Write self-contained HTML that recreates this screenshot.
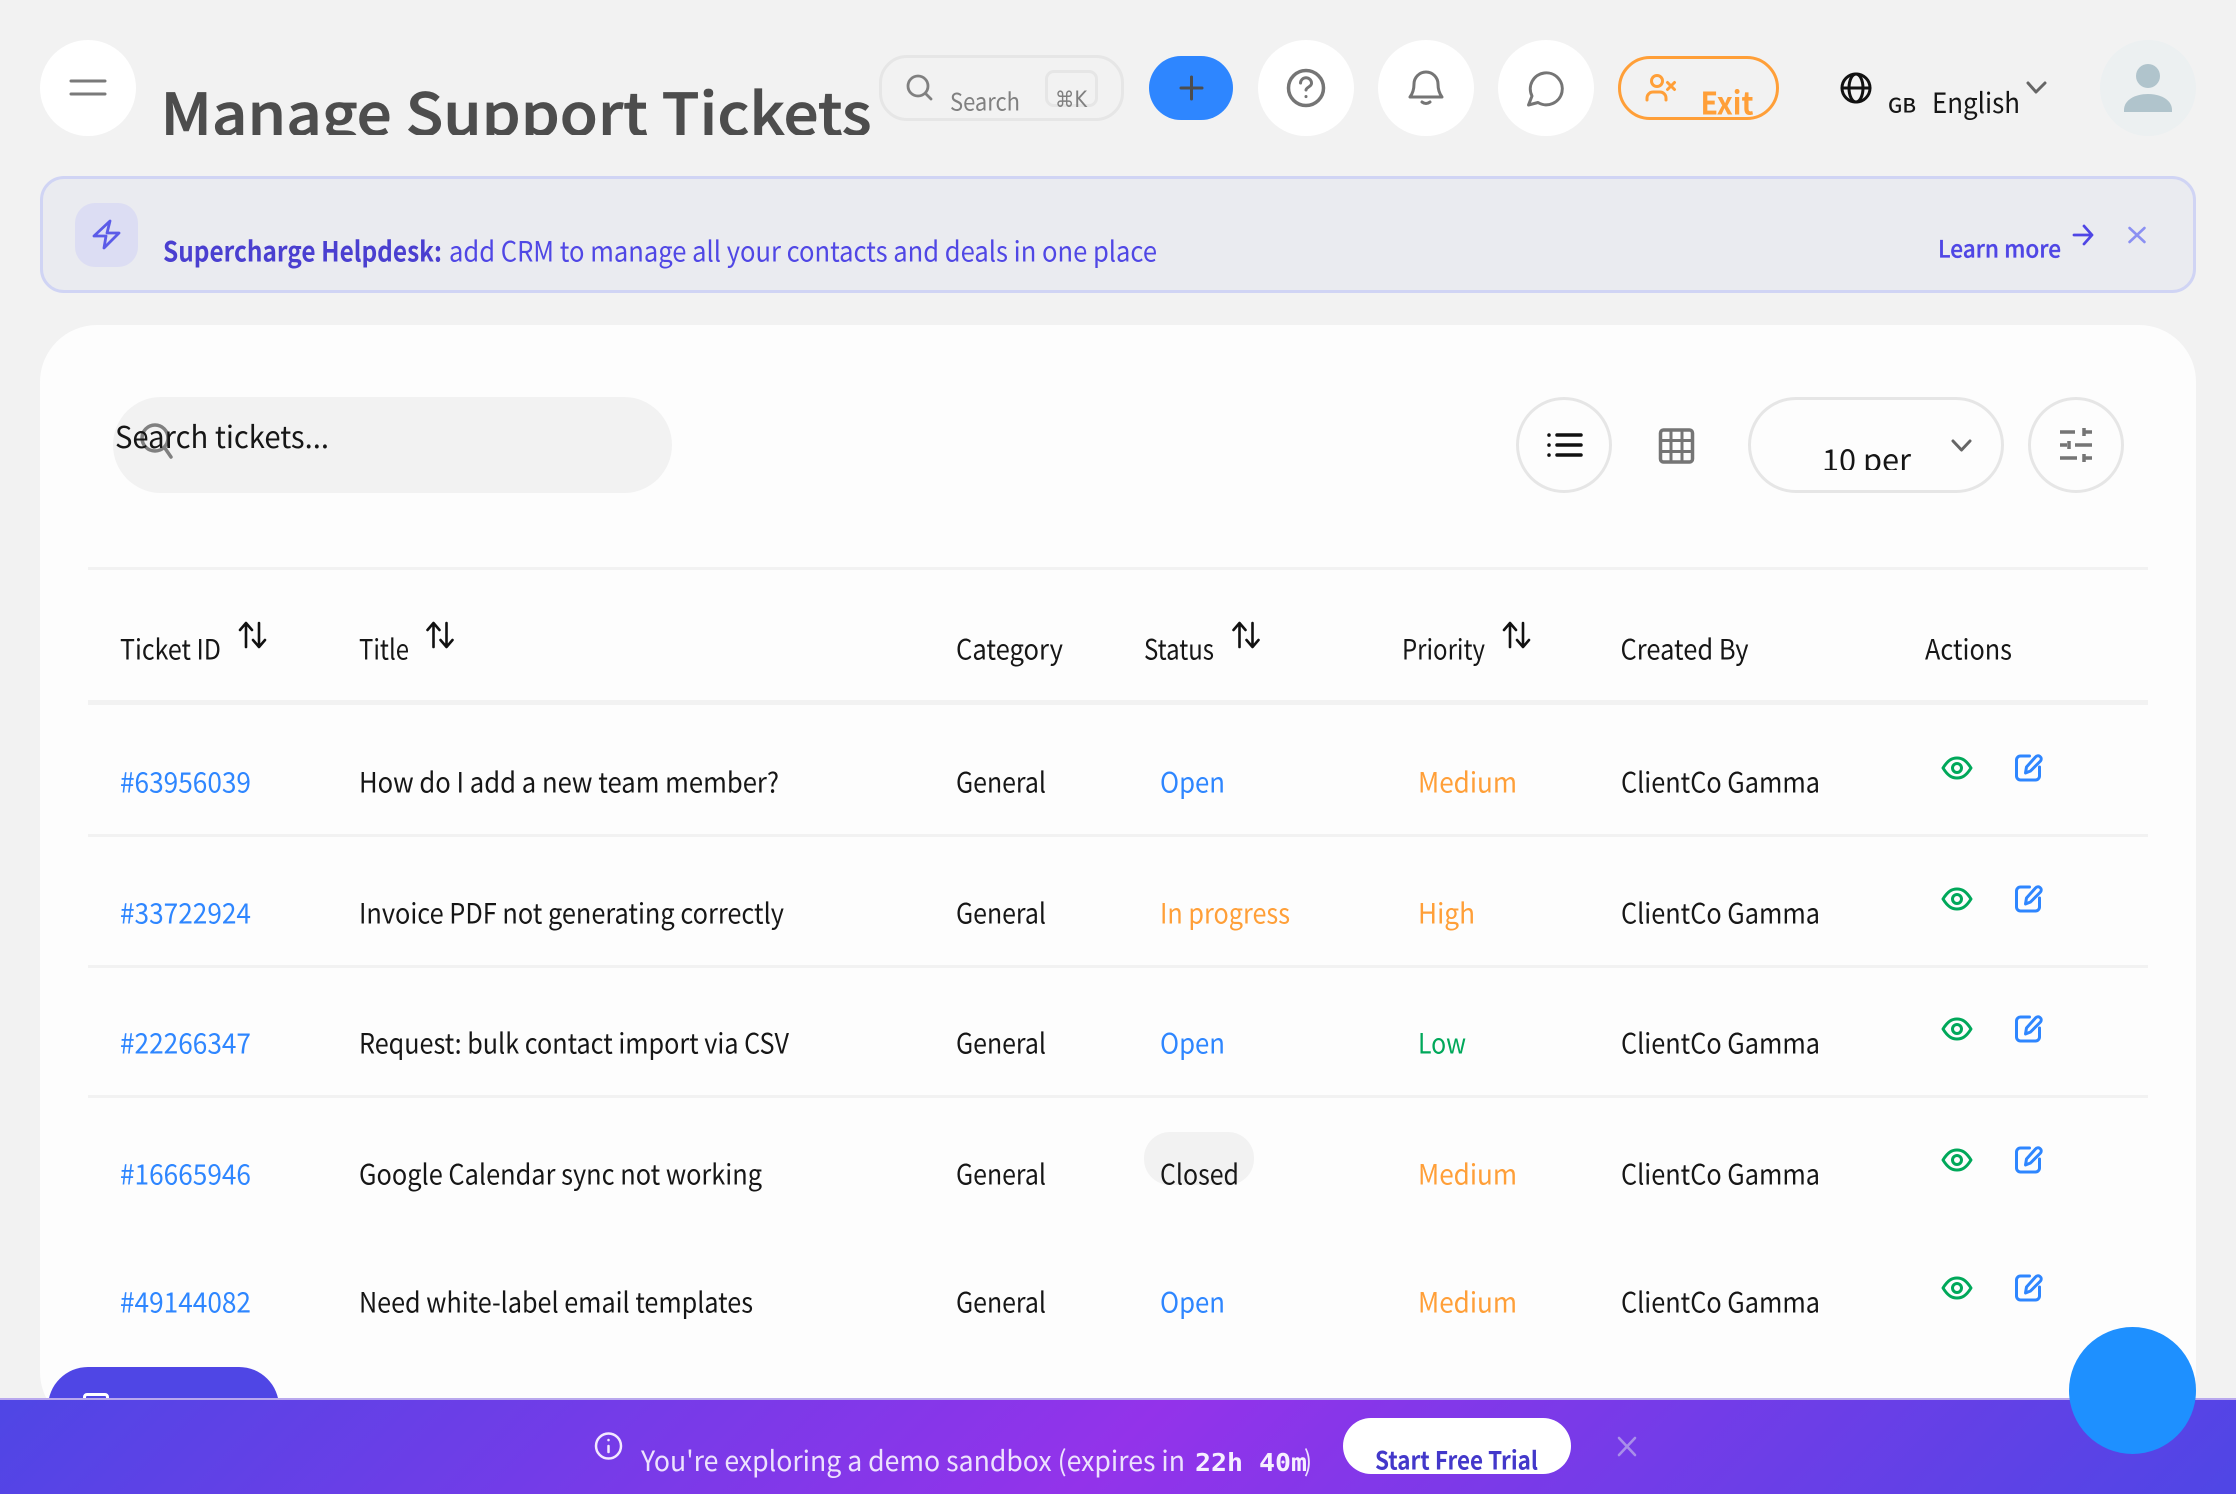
<!DOCTYPE html>
<html lang="en"><head><meta charset="utf-8"><title>Manage Support Tickets</title>
<style>
html,body{margin:0;padding:0;width:2236px;height:1494px;overflow:hidden;background:#f2f2f2}
.b{position:absolute;box-sizing:border-box}
svg{position:absolute;left:0;top:0}
text{font-family:"Noto Sans CJK SC","Liberation Sans",sans-serif;font-size:28px;fill:#161616}
.i{fill:none;stroke-linecap:round;stroke-linejoin:round}
</style></head><body>
<div class="b" style="left:40px;top:40px;width:96px;height:96px;border-radius:50%;background:#fff"></div>
<div class="b" style="left:879px;top:55px;width:245px;height:66px;border:3px solid #e6e6e6;border-radius:28px"></div>
<div class="b" style="left:1045px;top:70px;width:53px;height:37px;border:3px solid #e6e6e6;border-radius:9px"></div>
<div class="b" style="left:1149px;top:56px;width:84px;height:64px;border-radius:32px;background:#2e86ff"></div>
<div class="b" style="left:1258px;top:40px;width:96px;height:96px;border-radius:50%;background:#fff"></div>
<div class="b" style="left:1378px;top:40px;width:96px;height:96px;border-radius:50%;background:#fff"></div>
<div class="b" style="left:1498px;top:40px;width:96px;height:96px;border-radius:50%;background:#fff"></div>
<div class="b" style="left:1618px;top:56px;width:161px;height:64px;border:3px solid #ff9f38;border-radius:32px"></div>
<div class="b" style="left:2100px;top:40px;width:96px;height:96px;border-radius:50%;background:#ecf0f1"></div>
<div class="b" style="left:40px;top:176px;width:2156px;height:117px;border:3px solid #d0d4f4;border-radius:24px;background:#eaebf0"></div>
<div class="b" style="left:75px;top:203px;width:63px;height:64px;border-radius:20px;background:#dcddf3"></div>
<div class="b" style="left:40px;top:325px;width:2156px;height:1104px;border-radius:57px;background:#fdfdfd"></div>
<div class="b" style="left:113px;top:397px;width:559px;height:96px;border-radius:48px;background:#f2f2f2"></div>
<div class="b" style="left:1516px;top:397px;width:96px;height:96px;border:3px solid #e6e6e6;border-radius:50%"></div>
<div class="b" style="left:1748px;top:397px;width:256px;height:96px;border:3px solid #e6e6e6;border-radius:48px"></div>
<div class="b" style="left:2028px;top:397px;width:96px;height:96px;border:3px solid #e6e6e6;border-radius:50%"></div>
<div class="b" style="left:88px;top:567px;width:2060px;height:3px;background:#f2f2f2"></div>
<div class="b" style="left:88px;top:700px;width:2060px;height:5px;background:#f2f2f2"></div>
<div class="b" style="left:88px;top:834px;width:2060px;height:3px;background:#f2f2f2"></div>
<div class="b" style="left:88px;top:965px;width:2060px;height:3px;background:#f2f2f2"></div>
<div class="b" style="left:88px;top:1095px;width:2060px;height:3px;background:#f2f2f2"></div>
<div class="b" style="left:1144px;top:1132px;width:110px;height:53px;border-radius:26px;background:#f2f2f2"></div>
<div class="b" style="left:48px;top:1367px;width:231px;height:90px;border-radius:40px;background:#4f46e5"></div>
<div class="b" style="left:83px;top:1393px;width:26px;height:20px;border:3px solid #fff;border-radius:4px"></div>
<div class="b" style="left:0;top:1398px;width:2236px;height:96px;background:linear-gradient(135deg,#4f46e5 0%,#9333ea 50%,#4f46e5 100%);border-top:2px solid #b9a8ee"></div>
<div class="b" style="left:1343px;top:1418px;width:228px;height:56px;border-radius:28px;background:#fff"></div>
<div class="b" style="left:2069px;top:1327px;width:127px;height:127px;border-radius:50%;background:#1e90ff"></div>

<svg width="2236" height="1494" viewBox="0 0 2236 1494" xmlns="http://www.w3.org/2000/svg">
<defs>
<clipPath id="c1"><rect x="150" y="60" width="740" height="75"/></clipPath>
<clipPath id="c2"><rect x="1800" y="430" width="130" height="40"/></clipPath>
</defs>
<!-- header icons -->
<path class="i" stroke="#7a7a7a" stroke-width="3" d="M71 81H105M71 94H105"/>
<g clip-path="url(#c1)"><text x="160.500" y="135" style="font-size:58px;fill:#4d4d4d;font-weight:500;stroke:#4d4d4d;stroke-width:.7px" textLength="711" lengthAdjust="spacingAndGlyphs">Manage Support Tickets</text></g>
<g class="i" stroke="#808080" stroke-width="2.800"><circle cx="918" cy="86" r="10"/><path d="M925.500 93.500L931 99"/></g>
<text x="950" y="110.500" style="font-size:24px;fill:#808080" textLength="70" lengthAdjust="spacingAndGlyphs">Search</text>
<text x="1055" y="107" style="font-size:22px;fill:#808080;font-family:'DejaVu Sans',sans-serif" textLength="32" lengthAdjust="spacingAndGlyphs">⌘K</text>
<path class="i" stroke="#4d4d4d" stroke-width="3" d="M1181 88H1202M1191.500 77V99"/>
<g class="i" stroke="#757575" stroke-width="3.500"><circle cx="1306" cy="88" r="17.500"/><path stroke-width="3" d="M1300.500 83a5.500 5.500 0 0 1 11 .5c0 3-5.500 4-5.500 6.500M1306 96.500v.1"/></g>
<g class="i" stroke="#757575" stroke-width="3"><path d="M1410 97h32c-3-4-4-8-4-13a12 12 0 0 0-24 0c0 5-1 9-4 13z"/><path d="M1422 102q4 3 8 0"/></g>
<path class="i" stroke="#757575" stroke-width="3" d="M1528.500 105L1532 96A16 16 0 1 1 1538 102.500Z"/>
<g class="i" stroke="#ff9f38" stroke-width="3"><circle cx="1657" cy="81" r="5.500"/><path d="M1647 100v-2a6 6 0 0 1 6-6h7a6 6 0 0 1 6 6v2M1667.500 82.500l7 7M1674.500 82.500l-7 7"/></g>
<text x="1700.500" y="114.500" style="font-size:31px;fill:#ff9f38;font-weight:700" textLength="53" lengthAdjust="spacingAndGlyphs">Exit</text>
<g class="i" stroke="#111" stroke-width="3"><circle cx="1856" cy="88" r="14"/><ellipse cx="1856" cy="88" rx="7" ry="14"/><path d="M1842 88H1870"/></g>
<text x="1888" y="112.500" style="font-size:20px;font-weight:500" textLength="28" lengthAdjust="spacingAndGlyphs">GB</text>
<text x="1932" y="113" textLength="88" lengthAdjust="spacingAndGlyphs">English</text>
<path class="i" stroke="#666" stroke-width="3" d="M2028 83L2036 92L2045 83"/>
<circle cx="2148" cy="76" r="12" fill="#b0c4cc"/><path fill="#b0c4cc" d="M2124 112V110C2124 100 2135 94 2148 94C2161 94 2172 100 2172 110V112Z"/>
<!-- banner -->
<path class="i" stroke="#5b5be8" stroke-width="2.800" d="M110 221L94 236H106L104 248L119 233H107Z"/>
<text x="163" y="261.500" style="fill:#4a3fd0;font-weight:600" textLength="279" lengthAdjust="spacingAndGlyphs">Supercharge Helpdesk:</text>
<text x="449" y="261.500" style="fill:#5047e5" textLength="708" lengthAdjust="spacingAndGlyphs">add CRM to manage all your contacts and deals in one place</text>
<text x="1938" y="257.500" style="font-size:24px;fill:#4f46e5;font-weight:500;stroke:#4f46e5;stroke-width:.3px" textLength="123" lengthAdjust="spacingAndGlyphs">Learn more</text>
<path class="i" stroke="#4f46e5" stroke-width="2.800" d="M2074 235H2092M2084 226L2092 235L2084 244"/>
<path class="i" stroke="#8b90f2" stroke-width="2.600" d="M2129.500 228L2144.500 242M2144.500 228L2129.500 242"/>
<!-- toolbar -->
<g class="i" stroke="#808080" stroke-width="3.500"><circle cx="155" cy="438" r="13"/><path d="M164.500 447.500L171 457"/></g>
<text x="115" y="448" style="font-size:30px" textLength="214" lengthAdjust="spacingAndGlyphs">Search tickets...</text>
<g class="i" stroke="#111" stroke-width="3.500"><path d="M1557 435H1581M1557 445H1581M1557 455H1581M1549 435v.1M1549 445v.1M1549 455v.1"/></g>
<g class="i" stroke="#757575" stroke-width="3.500"><rect x="1660.500" y="430" width="32" height="32" rx="3"/><path stroke-width="3" d="M1671 430V462M1682 430V462M1660.500 440.500H1692.500M1660.500 451.500H1692.500"/></g>
<g clip-path="url(#c2)"><text x="1822" y="471" textLength="89" lengthAdjust="spacingAndGlyphs" style="font-size:30px">10 per</text></g>
<path class="i" stroke="#666" stroke-width="3" d="M1953 441L1961.500 450L1970 441"/>
<g fill="none" stroke="#757575" stroke-width="3.500"><path d="M2060 432H2075M2084 432H2092M2084 428V436M2060 445H2067M2075 445H2092M2069 441V449M2060 458H2077M2084 458H2092M2084 454V462"/></g>
<!-- table head -->
<text x="120" y="659.500" textLength="101" lengthAdjust="spacingAndGlyphs">Ticket ID</text>
<text x="359" y="659.500" textLength="50" lengthAdjust="spacingAndGlyphs">Title</text>
<text x="956" y="659.500" textLength="107" lengthAdjust="spacingAndGlyphs">Category</text>
<text x="1144" y="659.500" textLength="70" lengthAdjust="spacingAndGlyphs">Status</text>
<text x="1402" y="659.500" textLength="83" lengthAdjust="spacingAndGlyphs">Priority</text>
<text x="1620.500" y="659.500" textLength="128" lengthAdjust="spacingAndGlyphs">Created By</text>
<text x="1925" y="659.500" textLength="87" lengthAdjust="spacingAndGlyphs">Actions</text>
<g class="i" stroke="#111" stroke-width="2.600">
<path d="M246 647V624M240 630L246 623L252 630M259 623V646M253 640L259 647L265 640"/>
<path transform="translate(187.500 0)" d="M246 647V624M240 630L246 623L252 630M259 623V646M253 640L259 647L265 640"/>
<path transform="translate(993.500 0)" d="M246 647V624M240 630L246 623L252 630M259 623V646M253 640L259 647L265 640"/>
<path transform="translate(1264 0)" d="M246 647V624M240 630L246 623L252 630M259 623V646M253 640L259 647L265 640"/>
</g>
<!-- row 1 -->
<text x="120" y="792.500" style="fill:#2e86ff" textLength="131" lengthAdjust="spacingAndGlyphs">#63956039</text>
<text x="359" y="792.500" textLength="420" lengthAdjust="spacingAndGlyphs">How do I add a new team member?</text>
<text x="956" y="792.500" textLength="90" lengthAdjust="spacingAndGlyphs">General</text>
<text x="1160" y="792.500" style="fill:#2e86ff" textLength="65" lengthAdjust="spacingAndGlyphs">Open</text>
<text x="1418" y="792.500" style="fill:#ff9f38" textLength="99" lengthAdjust="spacingAndGlyphs">Medium</text>
<text x="1621" y="792.500" textLength="199" lengthAdjust="spacingAndGlyphs">ClientCo Gamma</text>
<!-- row 2 -->
<text x="120" y="923.500" style="fill:#2e86ff" textLength="131" lengthAdjust="spacingAndGlyphs">#33722924</text>
<text x="359" y="923.500" textLength="425" lengthAdjust="spacingAndGlyphs">Invoice PDF not generating correctly</text>
<text x="956" y="923.500" textLength="90" lengthAdjust="spacingAndGlyphs">General</text>
<text x="1160" y="923.500" style="fill:#ff9f38" textLength="130" lengthAdjust="spacingAndGlyphs">In progress</text>
<text x="1418" y="923.500" style="fill:#ff9f38" textLength="57" lengthAdjust="spacingAndGlyphs">High</text>
<text x="1621" y="923.500" textLength="199" lengthAdjust="spacingAndGlyphs">ClientCo Gamma</text>
<!-- row 3 -->
<text x="120" y="1053.500" style="fill:#2e86ff" textLength="131" lengthAdjust="spacingAndGlyphs">#22266347</text>
<text x="359" y="1053.500" textLength="430" lengthAdjust="spacingAndGlyphs">Request: bulk contact import via CSV</text>
<text x="956" y="1053.500" textLength="90" lengthAdjust="spacingAndGlyphs">General</text>
<text x="1160" y="1053.500" style="fill:#2e86ff" textLength="65" lengthAdjust="spacingAndGlyphs">Open</text>
<text x="1418" y="1053.500" style="fill:#00a85a" textLength="48" lengthAdjust="spacingAndGlyphs">Low</text>
<text x="1621" y="1053.500" textLength="199" lengthAdjust="spacingAndGlyphs">ClientCo Gamma</text>
<!-- row 4 -->
<text x="120" y="1184.500" style="fill:#2e86ff" textLength="131" lengthAdjust="spacingAndGlyphs">#16665946</text>
<text x="359" y="1184.500" textLength="403" lengthAdjust="spacingAndGlyphs">Google Calendar sync not working</text>
<text x="956" y="1184.500" textLength="90" lengthAdjust="spacingAndGlyphs">General</text>
<text x="1160" y="1184.500" textLength="79" lengthAdjust="spacingAndGlyphs">Closed</text>
<text x="1418" y="1184.500" style="fill:#ff9f38" textLength="99" lengthAdjust="spacingAndGlyphs">Medium</text>
<text x="1621" y="1184.500" textLength="199" lengthAdjust="spacingAndGlyphs">ClientCo Gamma</text>
<!-- row 5 -->
<text x="120" y="1312.500" style="fill:#2e86ff" textLength="131" lengthAdjust="spacingAndGlyphs">#49144082</text>
<text x="359" y="1312.500" textLength="394" lengthAdjust="spacingAndGlyphs">Need white-label email templates</text>
<text x="956" y="1312.500" textLength="90" lengthAdjust="spacingAndGlyphs">General</text>
<text x="1160" y="1312.500" style="fill:#2e86ff" textLength="65" lengthAdjust="spacingAndGlyphs">Open</text>
<text x="1418" y="1312.500" style="fill:#ff9f38" textLength="99" lengthAdjust="spacingAndGlyphs">Medium</text>
<text x="1621" y="1312.500" textLength="199" lengthAdjust="spacingAndGlyphs">ClientCo Gamma</text>
<!-- action icons -->
<g transform="translate(0 0)"><path class="i" stroke="#00a85a" stroke-width="3" d="M1943 768C1948 760 1952 758 1957 758C1962 758 1966 760 1971 768C1966 776 1962 778 1957 778C1952 778 1948 776 1943 768Z"/><circle class="i" stroke="#00a85a" stroke-width="3" cx="1957" cy="768" r="4.500"/><path class="i" stroke="#2e86ff" stroke-width="3" d="M2029.500 756H2020.500a4 4 0 0 0-4 4V776a4 4 0 0 0 4 4H2035.500a4 4 0 0 0 4-4V767M2025.500 773L2026.500 767L2035.500 757a3 3 0 0 1 5 4L2030.500 771Z"/></g>
<g transform="translate(0 131)"><path class="i" stroke="#00a85a" stroke-width="3" d="M1943 768C1948 760 1952 758 1957 758C1962 758 1966 760 1971 768C1966 776 1962 778 1957 778C1952 778 1948 776 1943 768Z"/><circle class="i" stroke="#00a85a" stroke-width="3" cx="1957" cy="768" r="4.500"/><path class="i" stroke="#2e86ff" stroke-width="3" d="M2029.500 756H2020.500a4 4 0 0 0-4 4V776a4 4 0 0 0 4 4H2035.500a4 4 0 0 0 4-4V767M2025.500 773L2026.500 767L2035.500 757a3 3 0 0 1 5 4L2030.500 771Z"/></g>
<g transform="translate(0 261)"><path class="i" stroke="#00a85a" stroke-width="3" d="M1943 768C1948 760 1952 758 1957 758C1962 758 1966 760 1971 768C1966 776 1962 778 1957 778C1952 778 1948 776 1943 768Z"/><circle class="i" stroke="#00a85a" stroke-width="3" cx="1957" cy="768" r="4.500"/><path class="i" stroke="#2e86ff" stroke-width="3" d="M2029.500 756H2020.500a4 4 0 0 0-4 4V776a4 4 0 0 0 4 4H2035.500a4 4 0 0 0 4-4V767M2025.500 773L2026.500 767L2035.500 757a3 3 0 0 1 5 4L2030.500 771Z"/></g>
<g transform="translate(0 392)"><path class="i" stroke="#00a85a" stroke-width="3" d="M1943 768C1948 760 1952 758 1957 758C1962 758 1966 760 1971 768C1966 776 1962 778 1957 778C1952 778 1948 776 1943 768Z"/><circle class="i" stroke="#00a85a" stroke-width="3" cx="1957" cy="768" r="4.500"/><path class="i" stroke="#2e86ff" stroke-width="3" d="M2029.500 756H2020.500a4 4 0 0 0-4 4V776a4 4 0 0 0 4 4H2035.500a4 4 0 0 0 4-4V767M2025.500 773L2026.500 767L2035.500 757a3 3 0 0 1 5 4L2030.500 771Z"/></g>
<g transform="translate(0 520)"><path class="i" stroke="#00a85a" stroke-width="3" d="M1943 768C1948 760 1952 758 1957 758C1962 758 1966 760 1971 768C1966 776 1962 778 1957 778C1952 778 1948 776 1943 768Z"/><circle class="i" stroke="#00a85a" stroke-width="3" cx="1957" cy="768" r="4.500"/><path class="i" stroke="#2e86ff" stroke-width="3" d="M2029.500 756H2020.500a4 4 0 0 0-4 4V776a4 4 0 0 0 4 4H2035.500a4 4 0 0 0 4-4V767M2025.500 773L2026.500 767L2035.500 757a3 3 0 0 1 5 4L2030.500 771Z"/></g>
<!-- bottom bar -->
<g class="i" stroke="#f3e8ff" stroke-width="2.500"><circle cx="608.500" cy="1446" r="12.500"/><path d="M608.500 1446V1452M608.500 1440v.1"/></g>
<text x="641" y="1471" style="fill:#ede2fd" textLength="544" lengthAdjust="spacingAndGlyphs">You're exploring a demo sandbox (expires in</text>
<text x="1195" y="1471" style="font-family:'DejaVu Sans Mono','Liberation Mono',monospace;font-size:25px;font-weight:700;fill:#f6efff" textLength="112" lengthAdjust="spacingAndGlyphs">22h 40m</text>
<text x="1304" y="1471" style="fill:#ede2fd" textLength="8" lengthAdjust="spacingAndGlyphs">)</text>
<text x="1375" y="1469.500" style="font-size:25px;font-weight:700;fill:#4338ca" textLength="163" lengthAdjust="spacingAndGlyphs">Start Free Trial</text>
<path class="i" stroke="#a98eea" stroke-width="2.600" d="M1619 1438L1635 1455M1635 1438L1619 1455"/>
</svg>
</body></html>
